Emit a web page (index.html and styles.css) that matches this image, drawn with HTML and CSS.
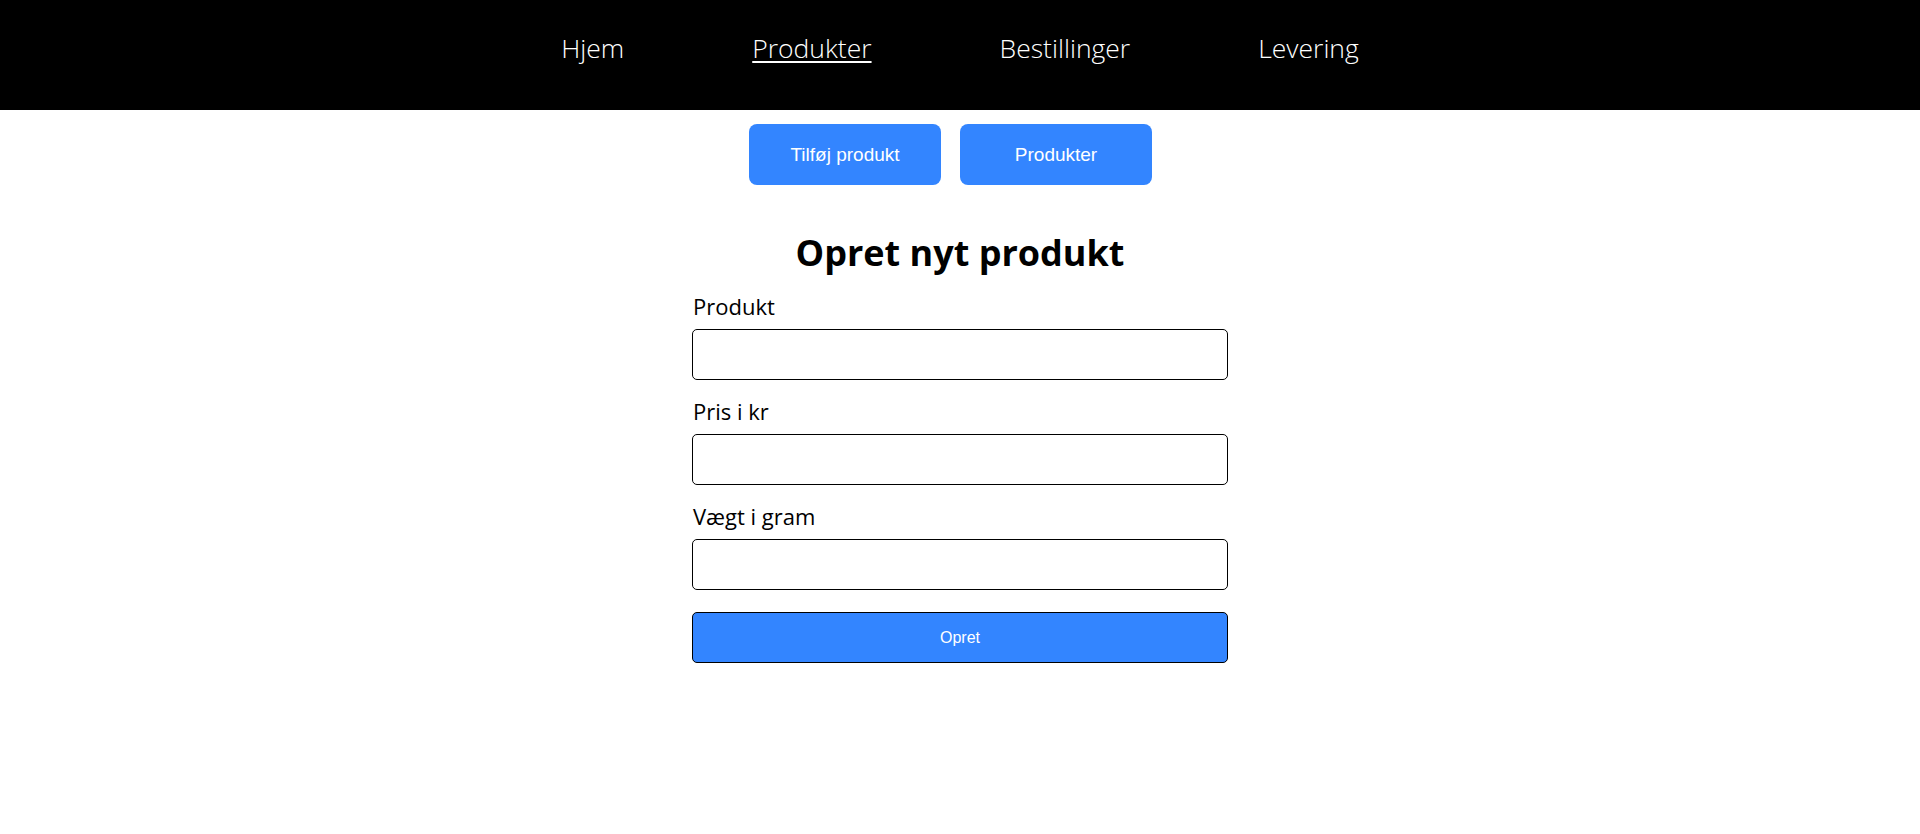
FILE: index.html
```html
<!DOCTYPE html>
<html lang="da">
<head>
<meta charset="utf-8">
<title>Opret nyt produkt</title>
<link rel="stylesheet" href="styles.css">
</head>
<body>
<nav class="topnav">
  <a class="navlink" href="#">Hjem</a>
  <a class="navlink active" href="#">Produkter</a>
  <a class="navlink" href="#">Bestillinger</a>
  <a class="navlink" href="#">Levering</a>
</nav>
<div class="subnav">
  <button class="subbtn" type="button">Tilføj produkt</button>
  <button class="subbtn" type="button">Produkter</button>
</div>
<main class="content">
  <h1 class="title">Opret nyt produkt</h1>
  <form class="form">
    <label class="label" for="produkt">Produkt</label>
    <input class="field" id="produkt" type="text">
    <label class="label" for="pris">Pris i kr</label>
    <input class="field" id="pris" type="text">
    <label class="label" for="vaegt">Vægt i gram</label>
    <input class="field" id="vaegt" type="text">
    <button class="submit" type="button">Opret</button>
  </form>
</main>
</body>
</html>
```
FILE: styles.css
```css
* { box-sizing: border-box; }
html, body { margin: 0; padding: 0; background: #fff; }
body { font-family: "Open Sans", "Noto Sans", sans-serif; color: #000; }

.topnav {
  height: 110px;
  background: #000;
  display: flex;
  justify-content: center;
  align-items: flex-start;
  padding-top: 28px;
}
.navlink {
  color: #fff;
  font-family: "Open Sans", sans-serif;
  font-weight: 300;
  font-size: 26.5px;
  line-height: 40px;
  text-decoration: none;
  padding: 0 64px;
}
.navlink.active {
  text-decoration: underline;
  text-decoration-thickness: 2px;
  text-underline-offset: 3px;
}

.subnav {
  display: flex;
  justify-content: center;
  margin-top: 14px;
}
.subbtn {
  width: 192px;
  height: 61px;
  margin: 0 19px 0 0;
  border: none;
  border-radius: 8px;
  background: #3385ff;
  color: #fff;
  font-family: "Liberation Sans", Arial, sans-serif;
  font-size: 19px;
  padding: 0;
}

.content {
  display: flex;
  flex-direction: column;
  align-items: center;
}
.title {
  margin: 47px 0 17px;
  font-family: "Open Sans", sans-serif;
  font-weight: 700;
  font-size: 36px;
  line-height: 42px;
  text-align: center;
}
.form {
  width: 536px;
  display: flex;
  flex-direction: column;
}
.label {
  font-size: 22px;
  line-height: 30px;
  margin: 0 0 8px 1px;
}
.field {
  height: 51px;
  border: 1px solid #000;
  border-radius: 5px;
  margin: 0 0 16px;
  font-size: 18px;
  padding: 0 10px;
  background: #fff;
}
.submit {
  margin-top: 6px;
  height: 51px;
  border: 1px solid #000;
  border-radius: 5px;
  background: #3385ff;
  color: #fff;
  font-family: "Liberation Sans", Arial, sans-serif;
  font-size: 16px;
}
```
